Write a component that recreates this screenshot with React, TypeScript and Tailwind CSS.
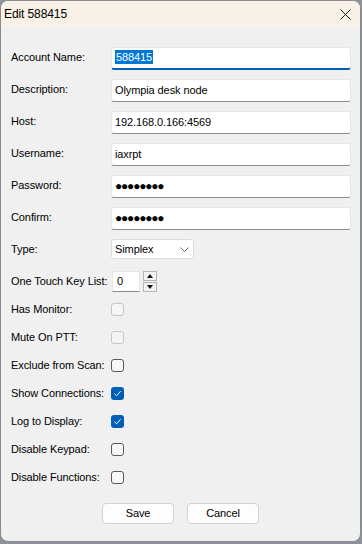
import React from "react";

const font = { fontFamily: '"Segoe UI", "Liberation Sans", Arial, sans-serif' };

const TextRow: React.FC<{ label: string; value: string; focused?: boolean; secret?: boolean }> = ({
  label,
  value,
  focused,
  secret,
}) => (
  <div className="flex items-center h-[23px] mb-[9px]">
    <div className="w-[100px] pb-1 leading-[16px] whitespace-nowrap">{label}</div>
    <div
      className={`w-[240px] h-[23px] bg-white rounded-[3px] border border-[#e6e6e6] flex items-center pl-[3px] pb-[2px] ${
        focused ? "border-b-2 border-b-[#005fb8]" : "border-b-[#8b8b8b]"
      }`}
    >
      {focused ? (
        <span className="bg-[#0078d7] text-white leading-[14px] px-[1px]">{value}</span>
      ) : secret ? (
        <span className="text-[12px] tracking-[-1.2px] leading-[14px]">{"\u25CF".repeat(8)}</span>
      ) : (
        <span className="leading-[14px]">{value}</span>
      )}
    </div>
  </div>
);

const Check: React.FC<{ label: string; checked?: boolean; disabled?: boolean }> = ({ label, checked, disabled }) => (
  <div className="flex items-center h-[28px]">
    <div className="w-[100px] whitespace-nowrap">{label}</div>
    {checked ? (
      <div className="w-[13px] h-[13px] rounded-[3px] bg-[#005fb8] flex items-center justify-center">
        <svg width="9" height="9" viewBox="0 0 9 9">
          <path d="M1.5 4.8 L3.6 6.8 L7.6 2.2" fill="none" stroke="white" strokeWidth="1" />
        </svg>
      </div>
    ) : (
      <div
        className={`w-[13px] h-[13px] rounded-[3px] border ${
          disabled ? "border-[#c6c6c6] bg-[#f5f5f5]" : "border-[#5a5a5a] bg-[#f7f7f7]"
        }`}
      />
    )}
  </div>
);

export default function App() {
  return (
    <div className="w-[362px] h-[544px] bg-[#8d919b] text-[11px] tracking-[-0.1px] text-black" style={font}>
      <div className="w-[361px] h-[542px] bg-[#f0f0f0] border border-[#8a8a8a] rounded-[8px] overflow-hidden flex flex-col">
        <div className="h-[26px] bg-[#f8f1e8] flex items-center justify-between pl-[3px] pr-[9px] shrink-0">
          <span className="leading-[16px] text-[12px]">Edit 588415</span>
          <svg width="11" height="11" viewBox="0 0 11 11">
            <path d="M0.5 0.5 L10.5 10.5 M10.5 0.5 L0.5 10.5" stroke="#1a1a1a" strokeWidth="1" />
          </svg>
        </div>
        <div className="pl-[10px] pt-[20px] flex flex-col">
          <TextRow label="Account Name:" value="588415" focused />
          <TextRow label="Description:" value="Olympia desk node" />
          <TextRow label="Host:" value="192.168.0.166:4569" />
          <TextRow label="Username:" value="iaxrpt" />
          <TextRow label="Password:" value="" secret />
          <TextRow label="Confirm:" value="" secret />

          <div className="flex items-center h-[20px]">
            <div className="w-[100px]">Type:</div>
            <div className="w-[83px] h-[20px] bg-white border border-[#dcdcdc] rounded-[3px] flex items-center justify-between pl-[3px] pr-[4px]">
              <span>Simplex</span>
              <svg width="9" height="5" viewBox="0 0 9 5">
                <path d="M0.5 0.5 L4.5 4.5 L8.5 0.5" fill="none" stroke="#555" strokeWidth="0.9" />
              </svg>
            </div>
          </div>

          <div className="flex items-center h-[21px] mt-[12px]">
            <div className="w-[101px] whitespace-nowrap">One Touch Key List:</div>
            <div className="w-[28px] h-[21px] bg-white border border-[#e6e6e6] border-b-[#8b8b8b] flex items-center pl-[4px]">
              0
            </div>
            <div className="ml-[3px] w-[14px] h-[21px] flex flex-col">
              <div className="h-[10px] border border-[#b5b5b5] bg-[#f3f3f3] flex items-center justify-center">
                <svg width="6" height="4" viewBox="0 0 6 4">
                  <path d="M0 4 L3 0 L6 4 Z" fill="#111" />
                </svg>
              </div>
              <div className="h-[10px] mt-[1px] border border-[#b5b5b5] bg-[#f3f3f3] flex items-center justify-center">
                <svg width="6" height="4" viewBox="0 0 6 4">
                  <path d="M0 0 L3 4 L6 0 Z" fill="#111" />
                </svg>
              </div>
            </div>
          </div>

          <div className="mt-[3px] flex flex-col">
            <Check label="Has Monitor:" disabled />
            <Check label="Mute On PTT:" disabled />
            <Check label="Exclude from Scan:" />
            <Check label="Show Connections:" checked />
            <Check label="Log to Display:" checked />
            <Check label="Disable Keypad:" />
            <Check label="Disable Functions:" />
          </div>
        </div>
        <div className="flex justify-center gap-[13px] mt-[12px]">
          <button className="w-[72px] h-[21px] bg-[#fdfdfd] border border-[#d2d2d2] rounded-[4px]">Save</button>
          <button className="w-[72px] h-[21px] bg-[#fdfdfd] border border-[#d2d2d2] rounded-[4px]">Cancel</button>
        </div>
      </div>
    </div>
  );
}
